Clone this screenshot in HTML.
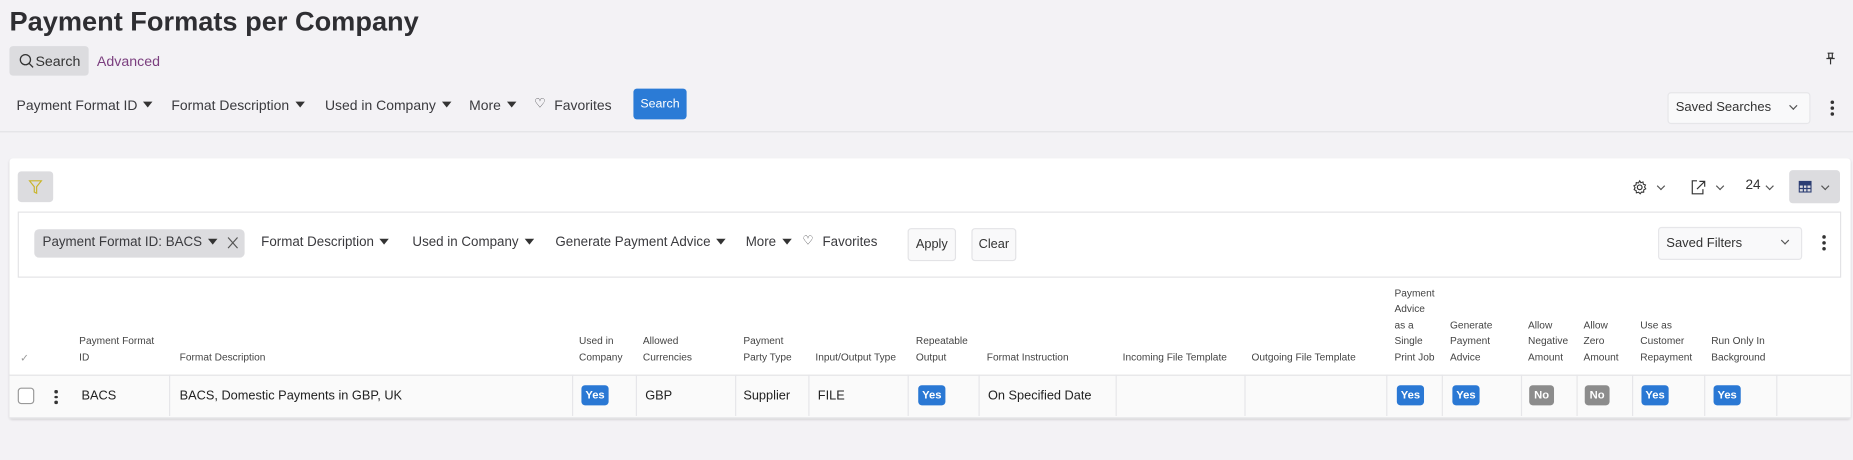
<!DOCTYPE html>
<html><head><meta charset="utf-8"><style>
html,body{margin:0;padding:0;width:1853px;height:460px;overflow:hidden;background:#f3f2f5;}
#w{position:absolute;left:0;top:0;width:1568px;height:389px;transform:scale(1.18176);transform-origin:0 0;font-family:"Liberation Sans",sans-serif;color:#333;}
.a{position:absolute;white-space:nowrap;}
.t{font-size:11.8px;color:#3a3a3e;}
.car{display:inline-block;width:0;height:0;border-left:4px solid transparent;border-right:4px solid transparent;border-top:5px solid #333;vertical-align:middle;margin-left:5px;margin-top:-2px;}
.chev{display:block;width:4px;height:4px;border-right:1px solid #555;border-bottom:1px solid #555;transform:rotate(45deg);}
.kb{position:absolute;width:3px;}
.kb i{display:block;width:3px;height:3px;background:#333;border-radius:50%;margin-bottom:2px;}
.h{position:absolute;font-size:8.6px;color:#444;line-height:13.4px;bottom:80px;}
.sep{position:absolute;top:317px;height:35px;width:1px;background:#e6e6e9;}
.d{position:absolute;top:329px;font-size:10.8px;color:#222;}
.b{position:absolute;top:326px;width:23px;height:17px;border-radius:3px;background:#2a78d4;color:#fff;font-size:9.5px;font-weight:bold;text-align:center;line-height:17px;}
.b.n{background:#8c8c8c;}
</style></head><body><div id="w">
<div class="a" style="left:8px;top:5px;font-size:23px;font-weight:bold;color:#2e2e32;">Payment Formats per Company</div>
<div class="a" style="left:8px;top:39px;width:67px;height:25px;background:#dcdcdf;border-radius:3px;"></div>
<svg class="a" style="left:16px;top:45px" width="13" height="13" viewBox="0 0 13 13"><circle cx="5.5" cy="5.5" r="4.3" fill="none" stroke="#333" stroke-width="1.1"/><path d="M8.6 8.6L12 12" stroke="#333" stroke-width="1.1"/></svg>
<div class="a" style="left:30px;top:45px;font-size:12px;color:#333;">Search</div>
<div class="a" style="left:82px;top:45px;font-size:12px;color:#7b3f7f;">Advanced</div>
<svg class="a" style="left:1545px;top:44px" width="8" height="11" viewBox="0 0 8 11"><path d="M1.5 1H6.5M2.5 1V5H5.5V1M0.5 5.5H7.5M4 5.5V10.5" stroke="#333" fill="none" stroke-width="1"/></svg>

<div class="a t" style="left:14px;top:82px;">Payment Format ID<span class="car"></span></div>
<div class="a t" style="left:145px;top:82px;">Format Description<span class="car"></span></div>
<div class="a t" style="left:275px;top:82px;">Used in Company<span class="car"></span></div>
<div class="a t" style="left:397px;top:82px;">More<span class="car"></span></div>
<div class="a t" style="left:452px;top:81px;font-size:11px;">♡</div>
<div class="a t" style="left:469px;top:82px;">Favorites</div>
<div class="a" style="left:536px;top:75px;width:45px;height:26px;background:#2b7bd6;border-radius:3px;color:#fff;font-size:10.5px;text-align:center;line-height:26px;">Search</div>
<div class="a" style="left:1411px;top:78px;width:119px;height:25px;background:#f9f9fa;border:1px solid #e6e6e9;border-radius:3px;"></div>
<div class="a" style="left:1418px;top:85px;font-size:11px;color:#333;">Saved Searches</div>
<div class="a" style="left:1515px;top:87px;"><span class="chev"></span></div>
<div class="kb" style="left:1549px;top:85px;"><i></i><i></i><i></i></div>
<div class="a" style="left:0;top:111px;width:1568px;height:1px;background:#e2e2e5;"></div>

<div class="a" style="left:8px;top:134px;width:1558px;height:220px;background:#fff;border-radius:3px;box-shadow:0 1px 2px rgba(0,0,0,.12);"></div>
<div class="a" style="left:15px;top:145px;width:30px;height:26px;background:#dcdcdf;border-radius:3px;"></div>
<svg class="a" style="left:24px;top:152px" width="12" height="13" viewBox="0 0 12 13"><path d="M1 1H11L7 6V11.5L5 10.5V6Z" fill="none" stroke="#c9b52a" stroke-width="1"/></svg>
<svg class="a" style="left:1381px;top:152px" width="13" height="13" viewBox="0 0 13 13"><circle cx="6.5" cy="6.5" r="2" fill="none" stroke="#333"/><path d="M6.5 1L7.5 2.6L9.3 2L9.6 3.9L11.4 4.5L10.6 6.3L11.6 7.8L9.9 8.7L9.9 10.6L8 10.5L6.9 12L5.6 10.7L3.7 11.2L3.5 9.3L1.8 8.5L2.6 6.8L1.6 5.2L3.4 4.4L3.6 2.5L5.5 2.8Z" fill="none" stroke="#333" stroke-width="0.9"/></svg>
<div class="a" style="left:1403px;top:155px;"><span class="chev"></span></div>
<svg class="a" style="left:1431px;top:151px" width="13" height="14" viewBox="0 0 13 14"><path d="M5 2H1V13H10V9M5 9L11 3M7 2.5H11.5V7" fill="none" stroke="#333" stroke-width="1"/></svg>
<div class="a" style="left:1453px;top:155px;"><span class="chev"></span></div>
<div class="a" style="left:1477px;top:151px;font-size:11.5px;color:#333;">24</div>
<div class="a" style="left:1495px;top:155px;"><span class="chev"></span></div>
<div class="a" style="left:1514px;top:144px;width:43px;height:28px;background:#dcdcdf;border-radius:3px;"></div>
<svg class="a" style="left:1522px;top:153px" width="11" height="10" viewBox="0 0 11 10"><rect x="0.5" y="0.5" width="10" height="9" fill="none" stroke="#2c3e73"/><path d="M0.5 3.5H10.5M0.5 6.5H10.5M4 0.5V9.5M7 0.5V9.5" stroke="#2c3e73"/><rect x="0.5" y="0.5" width="10" height="3" fill="#2c3e73"/></svg>
<div class="a" style="left:1542px;top:155px;"><span class="chev"></span></div>

<div class="a" style="left:15px;top:179px;width:1541px;height:54px;border:1px solid #e3e3e6;"></div>
<div class="a" style="left:29px;top:194px;width:178px;height:24px;background:#dcdcdf;border-radius:4px;"></div>
<div class="a t" style="left:36px;top:199px;font-size:11.3px;">Payment Format ID: BACS<span class="car"></span></div>
<svg class="a" style="left:192px;top:200px" width="10" height="11" viewBox="0 0 10 11"><path d="M1 1L9 10M9 1L1 10" stroke="#555" stroke-width="1"/></svg>
<div class="a t" style="left:221px;top:199px;font-size:11.3px;">Format Description<span class="car"></span></div>
<div class="a t" style="left:349px;top:199px;font-size:11.3px;">Used in Company<span class="car"></span></div>
<div class="a t" style="left:470px;top:199px;font-size:11.3px;">Generate Payment Advice<span class="car"></span></div>
<div class="a t" style="left:631px;top:199px;font-size:11.3px;">More<span class="car"></span></div>
<div class="a t" style="left:679px;top:198px;font-size:10.5px;">♡</div>
<div class="a t" style="left:696px;top:199px;font-size:11.3px;">Favorites</div>
<div class="a" style="left:768px;top:193px;width:39px;height:26px;background:#f9f9fa;border:1px solid #e3e3e6;border-radius:3px;font-size:10.8px;text-align:center;line-height:26px;color:#333;">Apply</div>
<div class="a" style="left:822px;top:193px;width:36px;height:26px;background:#f9f9fa;border:1px solid #e3e3e6;border-radius:3px;font-size:10.8px;text-align:center;line-height:26px;color:#333;">Clear</div>
<div class="a" style="left:1403px;top:192px;width:120px;height:26px;background:#f9f9fa;border:1px solid #e6e6e9;border-radius:3px;"></div>
<div class="a" style="left:1410px;top:200px;font-size:11px;color:#333;">Saved Filters</div>
<div class="a" style="left:1508px;top:201px;"><span class="chev"></span></div>
<div class="kb" style="left:1542px;top:199px;"><i></i><i></i><i></i></div>

<div class="a" style="left:17px;top:298px;font-size:9px;color:#999;">✓</div>
<div class="h" style="left:67px;">Payment Format<br>ID</div>
<div class="h" style="left:152px;">Format Description</div>
<div class="h" style="left:490px;">Used in<br>Company</div>
<div class="h" style="left:544px;">Allowed<br>Currencies</div>
<div class="h" style="left:629px;">Payment<br>Party Type</div>
<div class="h" style="left:690px;">Input/Output Type</div>
<div class="h" style="left:775px;">Repeatable<br>Output</div>
<div class="h" style="left:835px;">Format Instruction</div>
<div class="h" style="left:950px;">Incoming File Template</div>
<div class="h" style="left:1059px;">Outgoing File Template</div>
<div class="h" style="left:1180px;">Payment<br>Advice<br>as a<br>Single<br>Print Job</div>
<div class="h" style="left:1227px;">Generate<br>Payment<br>Advice</div>
<div class="h" style="left:1293px;">Allow<br>Negative<br>Amount</div>
<div class="h" style="left:1340px;">Allow<br>Zero<br>Amount</div>
<div class="h" style="left:1388px;">Use as<br>Customer<br>Repayment</div>
<div class="h" style="left:1448px;">Run Only In<br>Background</div>

<div class="a" style="left:8px;top:317px;width:1558px;height:35px;background:#fafafa;border-top:1px solid #e3e3e6;border-bottom:1px solid #e6e6e9;"></div>
<div class="sep" style="left:143px"></div><div class="sep" style="left:484px"></div><div class="sep" style="left:538px"></div><div class="sep" style="left:622px"></div><div class="sep" style="left:684px"></div><div class="sep" style="left:768px"></div><div class="sep" style="left:828px"></div><div class="sep" style="left:944px"></div><div class="sep" style="left:1053px"></div><div class="sep" style="left:1173px"></div><div class="sep" style="left:1220px"></div><div class="sep" style="left:1287px"></div><div class="sep" style="left:1334px"></div><div class="sep" style="left:1381px"></div><div class="sep" style="left:1442px"></div><div class="sep" style="left:1503px"></div>
<div class="a" style="left:15px;top:328px;width:12px;height:12px;border:1px solid #999;border-radius:3px;background:#fff;"></div>
<div class="kb" style="left:46px;top:330px;"><i style="width:2.5px;height:2.5px"></i><i style="width:2.5px;height:2.5px"></i><i style="width:2.5px;height:2.5px"></i></div>
<div class="d" style="left:69px;">BACS</div>
<div class="d" style="left:152px;">BACS, Domestic Payments in GBP, UK</div>
<div class="b" style="left:492px;">Yes</div>
<div class="d" style="left:546px;">GBP</div>
<div class="d" style="left:629px;">Supplier</div>
<div class="d" style="left:692px;">FILE</div>
<div class="b" style="left:777px;">Yes</div>
<div class="d" style="left:836px;">On Specified Date</div>
<div class="b" style="left:1182px;">Yes</div>
<div class="b" style="left:1229px;">Yes</div>
<div class="b n" style="left:1294px;width:21px;">No</div>
<div class="b n" style="left:1341px;width:21px;">No</div>
<div class="b" style="left:1389px;">Yes</div>
<div class="b" style="left:1450px;">Yes</div>
</div></body></html>
